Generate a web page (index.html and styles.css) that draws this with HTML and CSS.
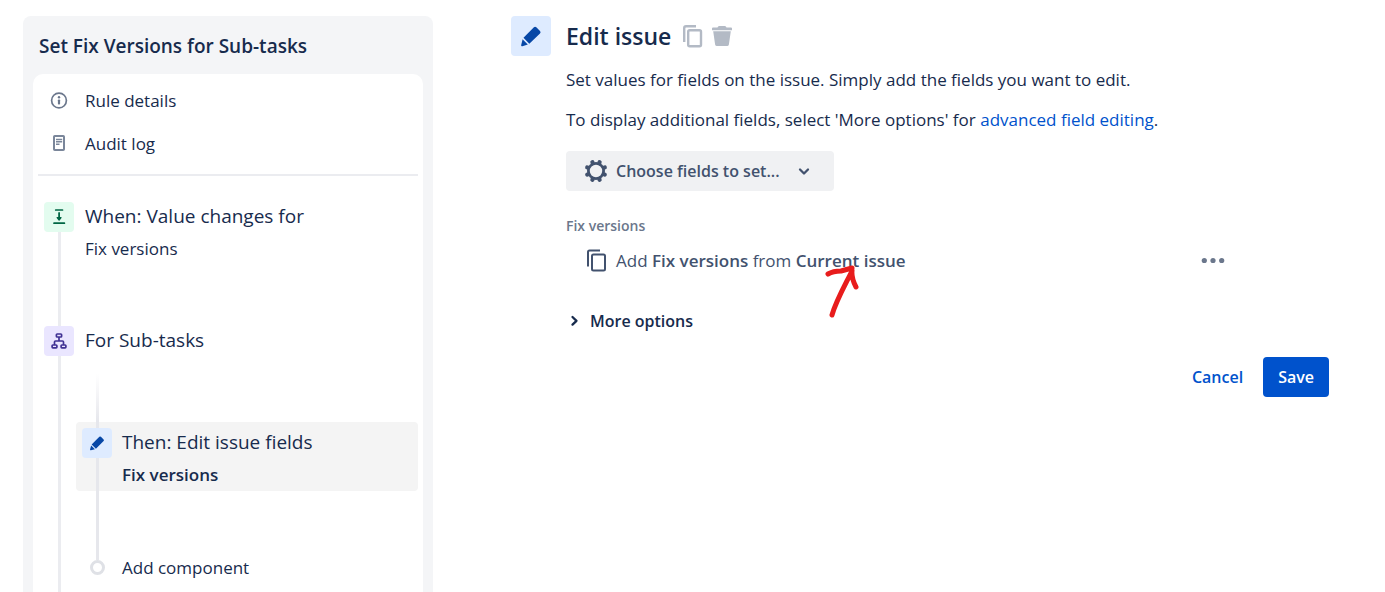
FILE: index.html
```html
<!DOCTYPE html>
<html lang="en">
<head>
<meta charset="utf-8">
<meta name="viewport" content="width=device-width, initial-scale=1">
<title>Set Fix Versions for Sub-tasks</title>
<link rel="stylesheet" href="styles.css">
</head>
<body>
<aside class="sidebar">
  <h1 class="rule-title">Set Fix Versions for Sub-tasks</h1>
  <div class="card">
    <nav class="links">
      <a class="nav-link" href="#details">
        <svg class="nav-icon" width="18" height="18" viewBox="0 0 18 18" fill="none"><circle cx="9" cy="8.500" r="7.400" stroke="#6b778c" stroke-width="1.700"/><circle cx="9" cy="5.300" r="1.200" fill="#6b778c"/><rect x="7.900" y="7.500" width="2.200" height="5" rx=".8" fill="#6b778c"/></svg>
        Rule details</a>
      <a class="nav-link" href="#audit">
        <svg class="nav-icon" width="18" height="18" viewBox="0 0 18 18" fill="none" stroke="#7a869a"><rect x="4" y="1" width="10" height="14" rx=".8" stroke-width="2"/><path d="M6 4.500h6.200M6 6.800h6.200M6 9.300h3.500" stroke-width="1.400"/></svg>
        Audit log</a>
    </nav>
    <ul class="steps">
      <li class="step step-trigger">
        <div class="rail">
          <span class="badge green"><svg width="18" height="18" viewBox="0 0 18 18" fill="none" stroke="#006644" stroke-linecap="round"><path d="M5.700 2h6.800M4 15.200h10.400" stroke-width="1.700"/><path d="M9.100 5v6" stroke-width="1.800"/><path d="M7.200 9.600h3.800l-1.900 2.400z" fill="#006644" stroke-width="1.300" stroke-linejoin="round"/></svg></span>
          <span class="line"></span>
        </div>
        <div class="step-body"><h2 class="step-title">When: Value changes for</h2><p class="step-text">Fix versions</p></div>
      </li>
      <li class="step step-branch">
        <div class="rail">
          <span class="badge purple"><svg width="18" height="18" viewBox="0 0 18 18" fill="none" stroke="#403294" stroke-width="1.700"><rect x="6.400" y="2" width="5.200" height="3" rx=".8"/><rect x="2.100" y="13" width="4.800" height="2.800" rx=".8"/><rect x="11.100" y="13" width="4.800" height="2.800" rx=".8"/><path d="M9 5v4M4.500 13V10q0-1 1-1h7q1 0 1 1v3"/></svg></span>
          <span class="line"></span>
        </div>
        <div class="branch-body">
          <h2 class="step-title branch-title">For Sub-tasks</h2>
          <span class="line thin lead"></span>
          <div class="nested selected">
            <div class="rail">
              <span class="line thin stub"></span>
              <span class="badge blue"><svg width="16" height="16" viewBox="0 0 24 24" fill="#0747a6"><path d="M15.500 2.700q1.200-1.200 2.400 0l4 4q1.200 1.200 0 2.400L10.400 20.500 4 14.200z"/><path d="M3.200 15.600l5.600 5.600-6 1.600q-1.500.3-1.200-1.200z"/></svg></span>
              <span class="line thin"></span>
            </div>
            <div class="step-body"><h2 class="step-title">Then: Edit issue fields</h2><p class="step-text strong">Fix versions</p></div>
          </div>
          <span class="line thin link"></span>
          <div class="nested add"><div class="rail"><span class="dot"></span></div><button class="add-button" type="button">Add component</button></div>
        </div>
      </li>
    </ul>
  </div>
</aside>
<main class="editor">
  <span class="badge blue large"><svg width="24" height="24" viewBox="0 0 24 24" fill="#0747a6"><path d="M14.900 3.300q1.200-1.200 2.400 0l3.700 3.700q1.200 1.200 0 2.400L10.300 19.700 4.500 13.800z"/><path d="M3.600 15.200l5.200 5.200-5.400 1.900q-1.500.3-1.200-1.200z"/></svg></span>
  <div class="content">
    <header class="heading">
      <h2 class="heading-title">Edit issue</h2>
      <button class="icon-button" type="button" aria-label="Duplicate"><svg width="22" height="24" viewBox="0 0 22 24" fill="none" stroke="#b3bac5" stroke-width="2.400"><rect x="6.200" y="6.200" width="12.800" height="16" rx="1.500"/><path d="M2.200 18V4q0-1.800 1.800-1.800H14"/></svg></button>
      <button class="icon-button" type="button" aria-label="Delete"><svg width="22" height="24" viewBox="0 0 22 24" fill="#b3bac5"><path d="M2 3.500h4.500q.5-1.500 1.500-1.500h6q1 0 1.500 1.500H20q1 0 1 1v1.800H1V4.500q0-1 1-1zM2.200 7.300h17.600l-1.900 13.200q-.3 1.500-1.800 1.500H5.900q-1.500 0-1.800-1.500z"/></svg></button>
    </header>
    <p class="copy">Set values for fields on the issue. Simply add the fields you want to edit.</p>
    <p class="copy">To display additional fields, select 'More options' for <a href="#advanced">advanced field editing</a>.</p>
    <button class="choose" type="button">
      <svg width="24" height="24" viewBox="0 0 24 24" fill="none" stroke="#42526e"><circle cx="12" cy="12" r="7.600" stroke-width="2.800"/><path d="M8.400 3.200l.3.800M15.600 3.200l-.3.800M20.800 8.400l-.8.300M20.800 15.600l-.8-.3M15.600 20.800l-.3-.8M8.400 20.800l.3-.8M3.200 15.600l.8-.3M3.200 8.400l.8.300" stroke-width="4.200" stroke-linecap="round"/></svg>
      <span>Choose fields to set...</span>
      <svg class="chevron" width="12" height="12" viewBox="0 0 12 12" fill="none" stroke="#42526e" stroke-width="2.300" stroke-linecap="round" stroke-linejoin="round"><path d="M2 4.500l4 4 4-4"/></svg>
    </button>
    <h3 class="field-label">Fix versions</h3>
    <div class="field-row">
      <svg width="22" height="24" viewBox="0 0 22 24" fill="none" stroke="#42526e" stroke-width="2"><rect x="6" y="5.500" width="13" height="16" rx="1.500"/><path d="M2 17.500V3Q2 1.500 3.500 1.500H14"/></svg>
      <div class="field-text">Add <b>Fix versions</b> from <b class="target">Current issue<svg class="arrow" width="38" height="58" viewBox="0 0 38 58" fill="none" stroke="#e81c1c" stroke-width="5" stroke-linecap="round" stroke-linejoin="round"><path d="M7 50C11 36 18 24 27 6M3 9Q8 6 16 6L27 3Q26 13 31 22"/></svg></b></div>
      <button class="more" type="button" aria-label="More actions"><svg width="24" height="8" viewBox="0 0 24 8" fill="#6b778c"><circle cx="3.300" cy="3.500" r="2.600"/><circle cx="12" cy="3.500" r="2.600"/><circle cx="20.700" cy="3.500" r="2.600"/></svg></button>
    </div>
    <button class="more-options" type="button"><svg width="10" height="12" viewBox="0 0 10 12" fill="none" stroke="#172b4d" stroke-width="2.300" stroke-linecap="round" stroke-linejoin="round"><path d="M2.500 2L6.500 5.800 2.500 9.600"/></svg>More options</button>
    <footer class="actions"><button class="cancel" type="button">Cancel</button><button class="save" type="button">Save</button></footer>
  </div>
</main>
</body>
</html>
```
FILE: styles.css
```css
* { box-sizing: border-box; }
body {
  display: flex;
  gap: 78px;
  min-height: 100vh;
  margin: 0;
  padding: 16px 56px 0 23px;
  background: #fff;
  color: #172b4d;
  font: 17px/24px "Open Sans", "Noto Sans", sans-serif;
}
h1, h2, h3, p, ul { margin: 0; padding: 0; font-weight: 400; }
b { font-weight: 600; }
button { padding: 0; border: 0; background: none; color: inherit; font: inherit; cursor: pointer; }
svg { display: block; flex: none; }
a { color: #0052cc; text-decoration: none; }

.sidebar {
  display: flex;
  flex-direction: column;
  flex: 0 0 410px;
  padding: 0 10px;
  border-radius: 8px 8px 0 0;
  background: #f4f5f7;
}
.rule-title { padding: 18px 6px 16px; font-size: 19px; font-weight: 600; line-height: 24px; }
.card {
  display: flex;
  flex-direction: column;
  flex: 1;
  padding: 5px 5px 0;
  border-radius: 10px 10px 0 0;
  background: #fff;
}
.links { padding-bottom: 9px; border-bottom: 2px solid #ebecf0; }
.nav-link { display: flex; align-items: center; gap: 17px; height: 43px; padding-left: 12px; color: #172b4d; }

.steps { display: flex; flex-direction: column; flex: 1; padding: 26px 0 0 6px; list-style: none; }
.step { display: flex; }
.step-trigger { gap: 11px; min-height: 124px; }
.step-branch { flex: 1; gap: 2px; }
.rail { display: flex; flex: 0 0 30px; flex-direction: column; align-items: center; }
.line { flex: 1; width: 3px; background: #ebecf0; }
.badge { display: flex; align-items: center; justify-content: center; flex: none; width: 30px; height: 30px; border-radius: 4px; }
.green { background: #e3fcef; }
.purple { background: #eae6ff; }
.blue { background: #deebff; }
.large { width: 40px; height: 40px; }
.step-title { font-size: 19px; line-height: 28px; }
.step-text { margin-top: 7px; }
.strong { font-weight: 600; }
.branch-body { display: flex; flex: 1; flex-direction: column; }
.branch-title { padding-left: 9px; }
.thin { background: #e6e7ec; }
.lead { flex: none; height: 48px; margin: 20px 0 0 20px; background: linear-gradient(transparent, #e6e7ec); }
.link { flex: none; height: 69px; margin-left: 20px; }
.stub { flex: 0 0 6px; }
.nested { display: flex; gap: 10px; padding-left: 6px; }
.selected { min-height: 69px; border-radius: 4px; background: #f4f4f4; }
.selected .step-body { padding-top: 6px; }
.dot { width: 15px; height: 15px; border: 3px solid #dfe1e6; border-radius: 50%; }
.add-button { height: 15px; line-height: 16px; }

.editor { display: flex; align-items: flex-start; flex: 1; gap: 15px; }
.content { flex: 1; }
.heading { display: flex; align-items: center; gap: 7px; height: 40px; }
.heading-title { margin-right: 4px; font-size: 23px; font-weight: 600; line-height: 32px; }
.copy { margin: 12px 0 16px; }
.choose {
  display: flex;
  align-items: center;
  gap: 8px;
  height: 40px;
  margin-top: 19px;
  padding: 0 24px 0 18px;
  border-radius: 4px;
  background: #f0f1f3;
  color: #42526e;
  font-size: 16px;
  font-weight: 600;
}
.chevron { margin-left: 10px; }
.field-label { margin-top: 25px; color: #6b778c; font-size: 14px; font-weight: 600; line-height: 20px; }
.field-row { display: flex; align-items: center; gap: 8px; margin-top: 13px; padding: 0 104px 0 20px; color: #42526e; }
.target { position: relative; }
.arrow { position: absolute; top: 16px; left: 29px; }
.more { margin-left: auto; }
.more-options { display: flex; align-items: center; gap: 10px; margin: 36px 0 0 4px; font-size: 16px; font-weight: 600; }
.actions { display: flex; justify-content: flex-end; gap: 20px; margin-top: 24px; font-size: 16px; font-weight: 600; }
.cancel { color: #0052cc; }
.save { height: 40px; padding: 0 15px; border-radius: 4px; background: #0052cc; color: #fff; }
```
